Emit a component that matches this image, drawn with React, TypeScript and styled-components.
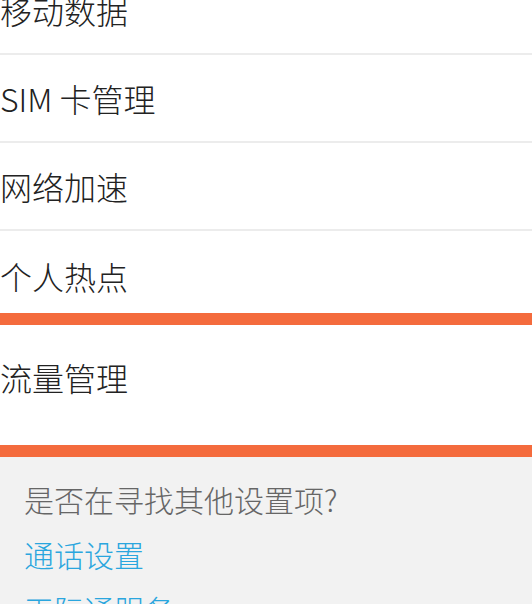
import * as React from 'react';
import styled, { createGlobalStyle } from 'styled-components';

const GlobalStyle = createGlobalStyle`
    html, body {
        margin: 0;
        padding: 0;
        background: #f2f2f2;
        overflow: hidden;
    }
    body {
        font-family: "Noto Sans CJK SC", "Noto Sans", sans-serif;
        font-weight: 300;
    }
`;

const Page = styled.div`
    width: 532px;
    height: 604px;
    overflow: hidden;
    background: #f2f2f2;
`;

// the list is scrolled up a little, so the first row is cut off
const List = styled.div`
    display: flex;
    flex-direction: column;
    margin-top: -33px;
    background: #fff;
`;

const Row = styled.div<{ $last?: boolean }>`
    display: flex;
    align-items: center;
    box-sizing: border-box;
    height: ${(p) => (p.$last ? 82 : 88)}px;
    padding-top: ${(p) => (p.$last ? 8 : 0)}px;
    border-bottom: ${(p) => (p.$last ? 'none' : '2px solid #ececec')};
    font-size: 32px;
    line-height: 40px;
    color: #222;
`;

const HighlightRow = styled.div`
    display: flex;
    align-items: flex-start;
    height: 120px;
    box-sizing: content-box;
    border-top: 12px solid #f46b3d;
    border-bottom: 12px solid #f46b3d;
    font-size: 32px;
    line-height: 40px;
    color: #222;
    background: #fff;
`;

const HighlightLabel = styled.span`
    margin-top: 32px;
`;

const Suggest = styled.div`
    display: flex;
    flex-direction: column;
    padding: 15px 0 0 24px;
    font-size: 30px;
    line-height: 55px;
`;

const SuggestTitle = styled.div`
    color: #666;
`;

const SuggestLink = styled.a`
    color: #2aa6de;
    text-decoration: none;
`;

const items = ['移动数据', 'SIM 卡管理', '网络加速'];

export default function App() {
    return (
        <Page>
            <GlobalStyle />
            <List>
                {items.map((t) => (
                    <Row key={t}>{t}</Row>
                ))}
                <Row $last>个人热点</Row>
                <HighlightRow>
                    <HighlightLabel>流量管理</HighlightLabel>
                </HighlightRow>
            </List>
            <Suggest>
                <SuggestTitle>是否在寻找其他设置项?</SuggestTitle>
                <SuggestLink href="#">通话设置</SuggestLink>
                <SuggestLink href="#">天际通服务</SuggestLink>
            </Suggest>
        </Page>
    );
}
